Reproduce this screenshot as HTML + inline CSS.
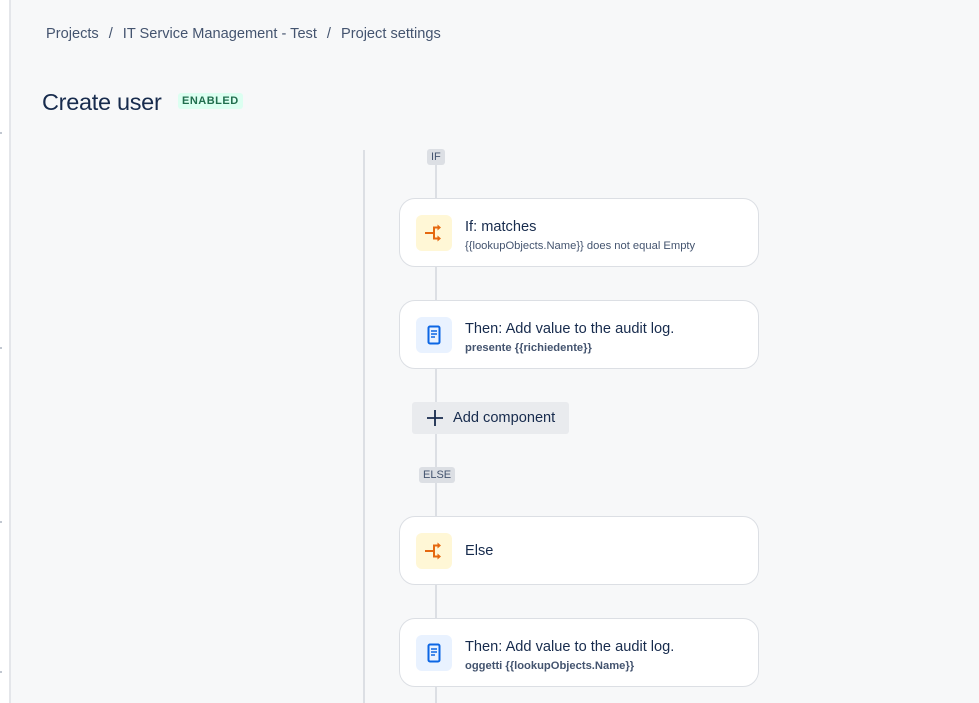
<!DOCTYPE html>
<html><head><style>
body{margin:0;width:979px;height:703px;overflow:hidden;background:#f7f8f9;font-family:"Liberation Sans",sans-serif;color:#172b4d;position:relative}
.lw{position:absolute;left:0;top:0;width:9px;height:703px;background:#fff;border-right:2px solid #e4e6ea}
.tick{position:absolute;left:0;width:2px;height:2px;background:#c1c7d0}
.bc{position:absolute;left:46px;top:26px;font-size:14.6px;color:#44546f}
.bc span{margin:0 10px}
h1{position:absolute;left:42px;top:89px;margin:0;font-size:23.5px;font-weight:500;color:#172b4d;letter-spacing:-0.3px}
.en{position:absolute;left:178px;top:93px;background:#dcfff1;color:#216e4e;font-size:11px;font-weight:bold;padding:2px 4px;border-radius:3px;letter-spacing:0.5px}
.vl{position:absolute;width:2px;background:#dcdfe4}
.lab{position:absolute;background:#dcdfe4;color:#44546f;font-size:11px;padding:2px 4px;border-radius:3px}
.card{position:absolute;left:399px;width:360px;height:69px;background:#fff;border:1px solid #dcdfe4;border-radius:16px;box-sizing:border-box}
.ic{position:absolute;left:16px;top:16px;width:36px;height:36px;border-radius:6px}
.t1{position:absolute;left:65px;top:20px;font-size:14.6px}
.t2{position:absolute;left:65px;top:41px;font-size:11.2px;color:#44546f}
.single{top:26px}
.add{position:absolute;left:412px;top:402px;width:157px;height:32px;background:#e9ebee;border-radius:3px;font-size:14.6px;font-weight:500;color:#172b4d}
</style></head><body>
<div class="lw"></div>
<div class="tick" style="top:132px"></div><div class="tick" style="top:347px"></div><div class="tick" style="top:521px"></div><div class="tick" style="top:671px"></div>
<div class="bc">Projects<span>/</span>IT Service Management - Test<span>/</span>Project settings</div>
<h1>Create user</h1>
<div class="en">ENABLED</div>
<div class="vl" style="left:363px;top:150px;height:553px"></div>
<div class="vl" style="left:435px;top:160px;height:543px"></div>
<div class="lab" style="left:427px;top:149px">IF</div>
<div class="lab" style="left:419px;top:467px">ELSE</div>

<div class="card" style="top:198px"><div class="ic" style="background:#fff7d6"><svg width="36" height="36"><path d="M9 18h9M18 12.5v11M17 12.5h6M17 23.5h6" stroke="#e56910" stroke-width="2" fill="none"/><path d="M21.5 9.5l3.5 3-3.5 3zM21.5 20.5l3.5 3-3.5 3z" fill="#e56910"/></svg></div><div class="t1">If: matches</div><div class="t2">{{lookupObjects.Name}} does not equal Empty</div></div>

<div class="card" style="top:300px"><div class="ic" style="background:#e9f2ff"><svg width="36" height="36"><rect x="12.5" y="9.5" width="11" height="17" rx="1.5" stroke="#0c66e4" stroke-width="2" fill="none"/><path d="M15 14h6M15 17h6M15 20h4" stroke="#0c66e4" stroke-width="1.5"/></svg></div><div class="t1">Then: Add value to the audit log.</div><div class="t2" style="font-weight:bold">presente {{richiedente}}</div></div>

<div class="add"><svg style="position:absolute;left:15px;top:8px" width="16" height="16"><path d="M8 0v16M0 8h16" stroke="#172b4d" stroke-width="1.8"/></svg><span style="position:absolute;left:41px;top:8px">Add component</span></div>

<div class="card" style="top:516px"><div class="ic" style="background:#fff7d6"><svg width="36" height="36"><path d="M9 18h9M18 12.5v11M17 12.5h6M17 23.5h6" stroke="#e56910" stroke-width="2" fill="none"/><path d="M21.5 9.5l3.5 3-3.5 3zM21.5 20.5l3.5 3-3.5 3z" fill="#e56910"/></svg></div><div class="t1 single">Else</div></div>

<div class="card" style="top:618px"><div class="ic" style="background:#e9f2ff"><svg width="36" height="36"><rect x="12.5" y="9.5" width="11" height="17" rx="1.5" stroke="#0c66e4" stroke-width="2" fill="none"/><path d="M15 14h6M15 17h6M15 20h4" stroke="#0c66e4" stroke-width="1.5"/></svg></div><div class="t1">Then: Add value to the audit log.</div><div class="t2" style="font-weight:bold">oggetti {{lookupObjects.Name}}</div></div>
</body></html>
